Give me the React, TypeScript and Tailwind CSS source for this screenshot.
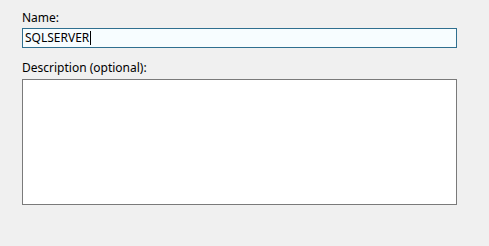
import React from 'react';

export default function App() {
  return (
    <div className="w-[489px] h-[246px] bg-[#f0f0f0] pl-[22px] pr-[32px] pt-[10px] font-['Noto_Sans',sans-serif] text-[12px] text-black">
      <label className="block leading-[15px] mb-[3px]">Name:</label>
      <div className="h-[20px] border border-[#2f6f8f] bg-[#f7fdff] flex items-center pl-[2px] leading-none">
        <span>SQLSERVER</span>
        <span className="w-px h-[14px] bg-black ml-px" />
      </div>
      <label className="block leading-[15px] mt-[12px] mb-[4px]">Description (optional):</label>
      <textarea
        className="block w-full h-[126px] border border-[#7a7a7a] bg-white resize-none outline-none"
        readOnly
      />
    </div>
  );
}
